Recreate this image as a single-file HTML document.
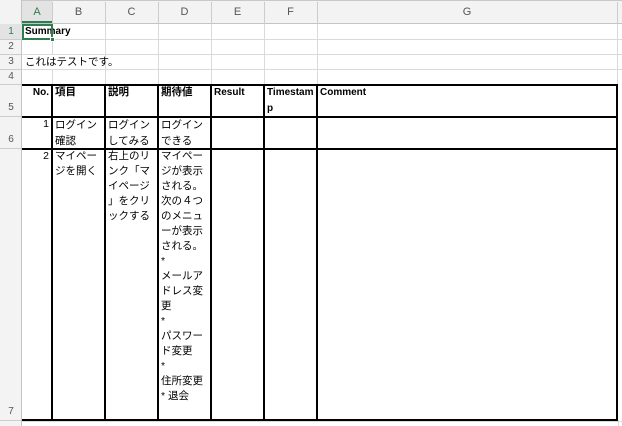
<!DOCTYPE html>
<html><head><meta charset="utf-8"><style>
*{margin:0;padding:0;box-sizing:border-box}
body{width:622px;height:426px;background:#fff;position:relative;overflow:hidden;font-family:"Liberation Sans","Noto Sans CJK JP",sans-serif;font-size:10.5px;color:#000}
.a{position:absolute}
.hl{position:absolute;height:1px;background:#dadada}
.vl{position:absolute;width:1px;background:#dadada}
.bh{position:absolute;height:2px;background:#000}
.bv{position:absolute;width:2px;background:#000}
.ch{position:absolute;top:0;height:24px;line-height:24px;text-align:center;color:#555;font-size:11px}
.rh{position:absolute;left:0;width:22px;text-align:center;color:#555;font-size:10px}
.t{position:absolute;line-height:15px;white-space:nowrap}
b{font-weight:bold}
</style></head><body>
<div class="a" style="left:0;top:0;width:622px;height:24px;background:#f3f3f3;border-top:1px solid #c8c8c8;border-bottom:1px solid #c4c4c4"></div>
<div class="a" style="left:0;top:0;width:22px;height:426px;background:#f3f3f3;border-right:1px solid #c4c4c4"></div>
<div class="a" style="left:22px;top:1px;width:30px;height:22px;background:#e3e3e3;border-bottom:2px solid #2e7d4f"></div>
<div class="a" style="left:0;top:24px;width:22px;height:15px;background:#e3e3e3"></div>
<div class="ch" style="left:22px;width:30px;color:#2e7d4f">A</div>
<div class="ch" style="left:52px;width:53px">B</div>
<div class="ch" style="left:105px;width:53px">C</div>
<div class="ch" style="left:158px;width:53px">D</div>
<div class="ch" style="left:211px;width:53px">E</div>
<div class="ch" style="left:264px;width:53px">F</div>
<div class="ch" style="left:317px;width:300px">G</div>
<div class="vl" style="left:52px;top:2px;height:22px;background:#ccc"></div>
<div class="vl" style="left:105px;top:2px;height:22px;background:#ccc"></div>
<div class="vl" style="left:158px;top:2px;height:22px;background:#ccc"></div>
<div class="vl" style="left:211px;top:2px;height:22px;background:#ccc"></div>
<div class="vl" style="left:264px;top:2px;height:22px;background:#ccc"></div>
<div class="vl" style="left:317px;top:2px;height:22px;background:#ccc"></div>
<div class="vl" style="left:617px;top:2px;height:22px;background:#ccc"></div>
<div class="rh" style="top:24px;height:15px;line-height:15px;color:#2e7d4f">1</div>
<div class="rh" style="top:39px;height:15px;line-height:15px">2</div>
<div class="rh" style="top:54px;height:15px;line-height:15px">3</div>
<div class="rh" style="top:69px;height:15px;line-height:15px">4</div>
<div class="rh" style="top:100px;height:16px;line-height:16px">5</div>
<div class="rh" style="top:132px;height:16px;line-height:16px">6</div>
<div class="rh" style="top:404px;height:16px;line-height:16px">7</div>
<div class="hl" style="left:0;top:39px;width:22px;background:#ccc"></div>
<div class="hl" style="left:0;top:54px;width:22px;background:#ccc"></div>
<div class="hl" style="left:0;top:69px;width:22px;background:#ccc"></div>
<div class="hl" style="left:0;top:84px;width:22px;background:#ccc"></div>
<div class="hl" style="left:0;top:116px;width:22px;background:#ccc"></div>
<div class="hl" style="left:0;top:148px;width:22px;background:#ccc"></div>
<div class="hl" style="left:0;top:420px;width:22px;background:#ccc"></div>
<div class="hl" style="left:22px;top:39px;width:600px"></div>
<div class="hl" style="left:22px;top:54px;width:600px"></div>
<div class="hl" style="left:22px;top:69px;width:600px"></div>
<div class="vl" style="left:52px;top:24px;height:15px"></div>
<div class="vl" style="left:52px;top:39px;height:15px"></div>
<div class="vl" style="left:52px;top:69px;height:15px"></div>
<div class="vl" style="left:105px;top:24px;height:60px"></div>
<div class="vl" style="left:158px;top:24px;height:60px"></div>
<div class="vl" style="left:211px;top:24px;height:60px"></div>
<div class="vl" style="left:264px;top:24px;height:60px"></div>
<div class="vl" style="left:317px;top:24px;height:60px"></div>
<div class="vl" style="left:617px;top:24px;height:60px"></div>
<div class="hl" style="left:22px;top:421px;width:600px"></div>
<div class="vl" style="left:618px;top:420px;height:6px"></div>
<div class="bh" style="left:22px;top:84px;width:596px"></div>
<div class="bh" style="left:22px;top:116px;width:596px"></div>
<div class="bh" style="left:22px;top:148px;width:596px"></div>
<div class="bh" style="left:22px;top:419px;width:596px"></div>
<div class="bv" style="left:51px;top:84px;height:337px"></div>
<div class="bv" style="left:104px;top:84px;height:337px"></div>
<div class="bv" style="left:157px;top:84px;height:337px"></div>
<div class="bv" style="left:210px;top:84px;height:337px"></div>
<div class="bv" style="left:263px;top:84px;height:337px"></div>
<div class="bv" style="left:316px;top:84px;height:337px"></div>
<div class="bv" style="left:616px;top:84px;height:337px"></div>
<div class="t" style="left:25px;top:24px;line-height:16px;font-size:10px"><b>Summary</b></div>
<div class="a" style="left:22px;top:24px;width:31px;height:16px;border:2px solid #2e7d4f"></div>
<div class="a" style="left:50px;top:37px;width:5px;height:5px;background:#2e7d4f;border:1px solid #fff"></div>
<div class="t" style="left:25px;top:54px;line-height:16px">これはテストです。</div>
<div class="t" style="left:22px;width:27px;text-align:right;top:85px;font-size:10px;line-height:16px"><b>No.</b></div>
<div class="t" style="left:55px;top:85px"><b>項目</b></div>
<div class="t" style="left:108px;top:85px"><b>説明</b></div>
<div class="t" style="left:161px;top:85px"><b>期待値</b></div>
<div class="t" style="left:214px;top:85px;font-size:10px;line-height:16px"><b>Result</b></div>
<div class="t" style="left:267px;top:85px;font-size:10px;line-height:16px"><b>Timestam<br>p</b></div>
<div class="t" style="left:320px;top:85px;font-size:10px;line-height:16px"><b>Comment</b></div>
<div class="t" style="left:22px;width:27px;text-align:right;top:117px">1</div>
<div class="t" style="left:55px;top:117px;line-height:16px">ログイン<br>確認</div>
<div class="t" style="left:108px;top:117px;line-height:16px">ログイン<br>してみる</div>
<div class="t" style="left:161px;top:117px;line-height:16px">ログイン<br>できる</div>
<div class="t" style="left:22px;width:27px;text-align:right;top:149px">2</div>
<div class="t" style="left:55px;top:149px">マイペー<br>ジを開く</div>
<div class="t" style="left:108px;top:149px">右上のリ<br>ンク「マ<br>イページ<br>」をクリ<br>ックする</div>
<div class="t" style="left:161px;top:149px">マイペー<br>ジが表示<br>される。<br>次の４つ<br>のメニュ<br>ーが表示<br>される。<br>*<br>メールア<br>ドレス変<br>更<br>*<br>パスワー<br>ド変更<br>*<br>住所変更<br>* 退会</div>
</body></html>
